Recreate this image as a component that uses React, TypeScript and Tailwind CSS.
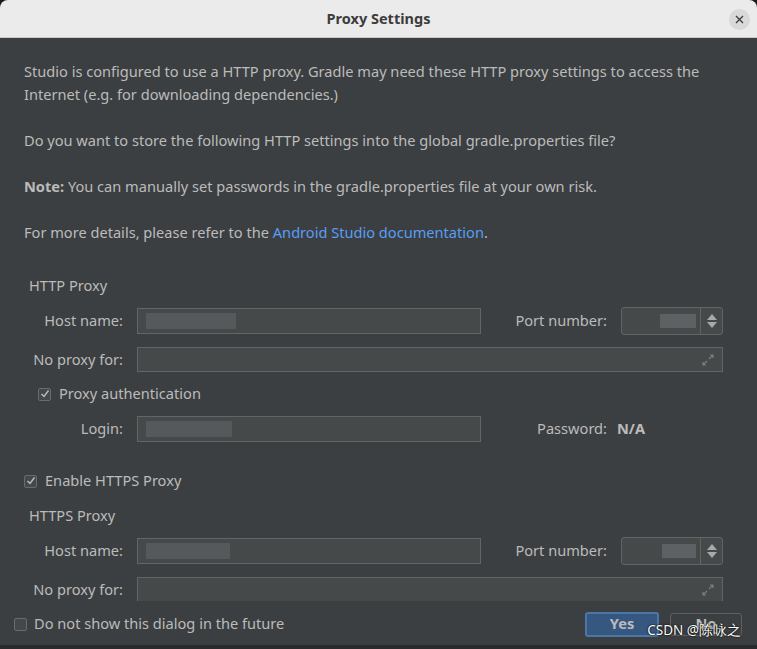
import React from "react";

const font = { fontFamily: '"Noto Sans", "Open Sans", sans-serif' };

function Field({ className = "", children }: { className?: string; children?: React.ReactNode }) {
  return (
    <div className={`h-[26px] bg-[#45494a] border border-[#646464] flex items-center pl-1 ${className}`}>
      {children}
    </div>
  );
}

function Spinner({ blurW }: { blurW: number }) {
  return (
    <div className="w-[102px] h-[28px] bg-[#45494a] border border-[#646464] rounded-[3px] flex">
      <div className="flex-1 flex items-center justify-end pr-1">
        <div className="h-[14px] bg-[#5d6163]" style={{ width: blurW }} />
      </div>
      <div className="w-[22px] border-l border-[#646464] flex flex-col items-center justify-center gap-[2px]">
        <svg width="10" height="6" viewBox="0 0 10 6"><path d="M5 0 L10 6 L0 6 Z" fill="#a9a9a9" /></svg>
        <svg width="10" height="6" viewBox="0 0 10 6"><path d="M0 0 L10 0 L5 6 Z" fill="#a9a9a9" /></svg>
      </div>
    </div>
  );
}

function ExpandField({ clip = false }: { clip?: boolean }) {
  return (
    <div className={`w-[586px] h-[25px] bg-[#45494a] border border-[#646464] ${clip ? "border-b-0" : ""} flex items-center justify-end pr-[8px]`}>
      <svg width="12" height="12" viewBox="0 0 12 12" fill="none" stroke="#7a7d80" strokeWidth="1.2">
        <path d="M7 5 L11 1 M8 1 H11 V4" />
        <path d="M5 7 L1 11 M1 8 V11 H4" />
      </svg>
    </div>
  );
}

function Check({ checked }: { checked: boolean }) {
  return (
    <div className="w-[13px] h-[13px] border border-[#6b6b6b] bg-[#43494a] rounded-[2px] flex items-center justify-center">
      {checked && (
        <svg width="10" height="10" viewBox="0 0 10 10" fill="none" stroke="#bdbdbd" strokeWidth="1.4">
          <path d="M1.5 5 L4 7.5 L8.5 1.5" />
        </svg>
      )}
    </div>
  );
}

function Label({ children }: { children: React.ReactNode }) {
  return <div className="w-[100px] text-right shrink-0 whitespace-nowrap">{children}</div>;
}

function ProxyGroup({ title, hostBlur, portBlur, clip }: { title: string; hostBlur: number; portBlur: number; clip?: boolean }) {
  return (
    <div>
      <div className="pl-[29px] h-[22px] flex items-center">{title}</div>
      <div className="flex items-center h-[28px] mt-[10px] pl-[23px]">
        <Label>Host name:</Label>
        <Field className="ml-[14px] w-[344px]">
          <div className="h-[16px] bg-[#55595b] ml-[4px]" style={{ width: hostBlur }} />
        </Field>
        <div className="ml-[26px] w-[100px] text-right whitespace-nowrap">Port number:</div>
        <div className="ml-[14px]">
          <Spinner blurW={portBlur} />
        </div>
      </div>
      <div className="flex items-center h-[25px] mt-[12px] pl-[23px]">
        <Label>No proxy for:</Label>
        <div className="ml-[14px]">
          <ExpandField clip={clip} />
        </div>
      </div>
    </div>
  );
}

export default function App() {
  return (
    <div className="w-[757px] h-[649px] bg-[#1b1b1b] overflow-hidden text-[14.6px] text-[#bbbbbb]" style={font}>
      <div className="w-full h-full flex flex-col bg-[#3c3f41] rounded-t-[8px] overflow-hidden">
        {/* Title bar */}
        <div className="h-[38px] shrink-0 bg-[#ebebeb] border-b border-[#c9c9c9] relative flex items-center justify-center">
          <span className="font-bold text-[#3c3c3c] text-[14.5px]">Proxy Settings</span>
          <div className="absolute right-[7px] top-[9px] w-[21px] h-[21px] rounded-full bg-[#d9d9d9] flex items-center justify-center">
            <svg width="9" height="9" viewBox="0 0 9 9" stroke="#3c3c3c" strokeWidth="1.3">
              <path d="M1 1 L8 8 M8 1 L1 8" />
            </svg>
          </div>
        </div>

        {/* Content */}
        <div className="h-[563px] shrink-0 overflow-hidden">
          <div className="pl-[24px] pt-[22px] leading-[23px]">
            <p>
              Studio is configured to use a HTTP proxy. Gradle may need these HTTP proxy settings to access the
              <br />
              Internet (e.g. for downloading dependencies.)
            </p>
            <p className="mt-[23px]">Do you want to store the following HTTP settings into the global gradle.properties file?</p>
            <p className="mt-[23px]">
              <b>Note:</b> You can manually set passwords in the gradle.properties file at your own risk.
            </p>
            <p className="mt-[23px]">
              For more details, please refer to the <span className="text-[#589df6]">Android Studio documentation</span>.
            </p>
          </div>

          <div className="mt-[31px]">
            <ProxyGroup title="HTTP Proxy" hostBlur={90} portBlur={36} />
            <div className="flex items-center h-[22px] mt-[11px] pl-[38px] gap-[8px]">
              <Check checked />
              <span>Proxy authentication</span>
            </div>
            <div className="flex items-center h-[26px] mt-[11px] pl-[23px]">
              <Label>Login:</Label>
              <Field className="ml-[14px] w-[344px]">
                <div className="h-[16px] bg-[#55595b] ml-[4px] w-[86px]" />
              </Field>
              <div className="ml-[54px] w-[72px] text-right">Password:</div>
              <div className="ml-[10px] font-bold">N/A</div>
            </div>
            <div className="flex items-center h-[22px] mt-[28px] pl-[24px] gap-[8px]">
              <Check checked />
              <span>Enable HTTPS Proxy</span>
            </div>
            <div className="mt-[13px]">
              <ProxyGroup title="HTTPS Proxy" hostBlur={84} portBlur={34} clip />
            </div>
          </div>
        </div>

        {/* Bottom bar */}
        <div className="flex-1 flex items-center pl-[14px] pr-[15px] pt-[2px] relative">
          <Check checked={false} />
          <span className="ml-[7px]">Do not show this dialog in the future</span>
          <div className="ml-auto flex items-center gap-[11px]">
            <div className="w-[74px] h-[25px] rounded-[3px] bg-[#365880] border-2 border-[#4a77a9] flex items-center justify-center font-bold text-[#bbbbbb]">
              Yes
            </div>
            <div className="w-[72px] h-[23px] rounded-[3px] bg-[#3c3f41] border border-[#5e6060] flex items-center justify-center font-bold text-[#bbbbbb]">
              No
            </div>
          </div>
          <div className="absolute right-[16px] bottom-[5px] text-[13.5px] text-white" style={{ textShadow: "0 0 2px #000, 0 0 1px #000" }}>
            CSDN @陈咏之
          </div>
        </div>
        <div className="h-[4px] shrink-0 bg-[#2b2b2b]" />
      </div>
    </div>
  );
}
